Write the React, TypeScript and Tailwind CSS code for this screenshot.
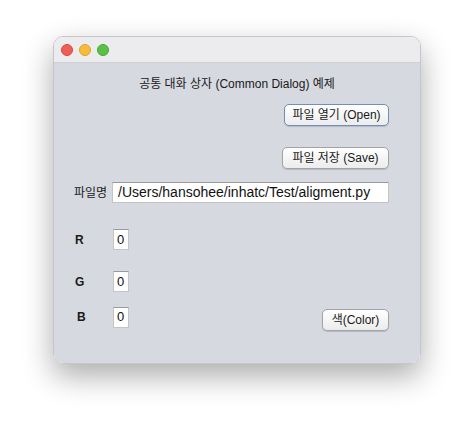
import React from "react";

const font = { fontFamily: '"Liberation Sans", "Noto Sans CJK KR", sans-serif' };

function MacButton({ label, focused, className }: { label: string; focused?: boolean; className?: string }) {
  return (
    <button
      className={`h-[22px] rounded-[5px] bg-gradient-to-b from-white to-[#ececec] text-[12px] text-[#1a1a1a] shadow-[0_1px_1px_rgba(0,0,0,0.15)] ${
        focused
          ? "border border-[#6f8fbf] shadow-[0_0_0_2px_rgba(120,160,220,0.45)]"
          : "border border-[#a3a3a6]"
      } ${className ?? ""}`}
    >
      {label}
    </button>
  );
}

function Field({ value, className }: { value: string; className?: string }) {
  return (
    <div
      className={`h-[21px] bg-white border border-[#c4c4c4] border-t-[#9a9a9a] flex items-center text-[#111] ${className ?? ""}`}
    >
      {value}
    </div>
  );
}

export default function App() {
  return (
    <div className="w-[474px] h-[434px] bg-white pt-[36px] pl-[53px]" style={font}>
      <div className="w-[368px] h-[328px] rounded-[10px] border border-[#c6c6ca] overflow-hidden flex flex-col shadow-[0_12px_30px_rgba(0,0,0,0.33)]">
        {/* title bar */}
        <div className="h-[26px] bg-[#ececee] border-b border-[#cfd0d4] flex items-center pl-[7px] gap-[6px] shrink-0">
          <span className="w-[12px] h-[12px] rounded-full bg-[#ee5d56] border border-[#d9483f]" />
          <span className="w-[12px] h-[12px] rounded-full bg-[#f5bd3a] border border-[#dca22a]" />
          <span className="w-[12px] h-[12px] rounded-full bg-[#5ac144] border border-[#45a833]" />
        </div>

        {/* content */}
        <div className="flex-1 bg-[#d6d9e0] flex flex-col">
          <div className="text-center text-[12px] text-[#1a1a1a] mt-[13px] h-[16px] leading-[16px]">
            공통 대화 상자 (Common Dialog) 예제
          </div>

          <div className="flex justify-end pr-[31px] mt-[12px]">
            <MacButton label="파일 열기 (Open)" focused className="w-[105px]" />
          </div>

          <div className="flex justify-end pr-[31px] mt-[21px]">
            <MacButton label="파일 저장 (Save)" className="w-[107px] h-[21px]" />
          </div>

          <div className="flex items-center mt-[13px] pl-[20px] pr-[31px]">
            <span className="w-[38px] text-[12px] text-[#1a1a1a]">파일명</span>
            <Field value="/Users/hansohee/inhatc/Test/aligment.py" className="flex-1 text-[14px] pl-[5px]" />
          </div>

          <div className="flex items-center mt-[26px] pl-[21px]">
            <span className="w-[38px] text-[12px] font-bold text-[#1a1a1a]">R</span>
            <Field value="0" className="w-[16px] text-[13px] pl-[3px]" />
          </div>

          <div className="flex items-center mt-[21px] pl-[21px]">
            <span className="w-[38px] text-[12px] font-bold text-[#1a1a1a]">G</span>
            <Field value="0" className="w-[16px] text-[13px] pl-[3px]" />
          </div>

          <div className="flex items-center mt-[11px] pl-[23px] pr-[31px]">
            <span className="w-[36px] text-[12px] font-bold text-[#1a1a1a]">B</span>
            <Field value="0" className="w-[16px] text-[13px] pl-[3px]" />
            <div className="flex-1" />
            <MacButton label="색(Color)" className="w-[67px] h-[21px] mt-[6px]" />
          </div>
        </div>
      </div>
    </div>
  );
}
